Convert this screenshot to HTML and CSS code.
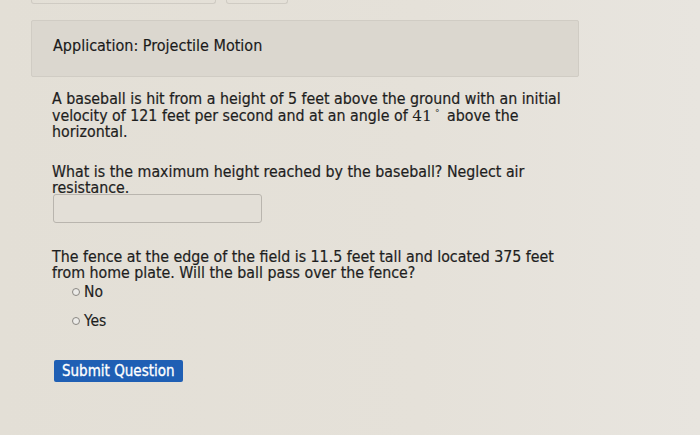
FILE: index.html
```html
<!DOCTYPE html>
<html>
<head>
<meta charset="utf-8">
<link rel="stylesheet" href="styles.css">
</head>
<body>
<div class="page">
  <div class="topbar"><span class="tab tab1"></span><span class="tab tab2"></span></div>
  <div class="header">Application: Projectile Motion</div>
  <div class="content">
    <p class="para">A baseball is hit from a height of 5 feet above the ground with an initial velocity of 121 feet per second and at an angle of <span class="math">41<span class="deg">°</span></span> above the horizontal.</p>
    <p class="para q2">What is the maximum height reached by the baseball? Neglect air resistance.</p>
    <div class="answer"></div>
    <p class="para q3">The fence at the edge of the field is 11.5 feet tall and located 375 feet from home plate. Will the ball pass over the fence?</p>
    <div class="options">
      <label class="opt"><span class="radio"></span>No</label>
      <label class="opt"><span class="radio"></span>Yes</label>
    </div>
    <button class="submit">Submit Question</button>
  </div>
</div>
</body>
</html>
```
FILE: styles.css
```css
html, body {
  margin: 0;
  padding: 0;
}
body {
  width: 700px;
  height: 435px;
  overflow: hidden;
  background: linear-gradient(90deg, #e3dfd6 0%, #e5e1d9 60%, #e8e5df 100%);
  font-family: "DejaVu Sans Condensed", "DejaVu Sans", sans-serif;
  color: #1e1e1e;
}
.page {
  padding-left: 31px;
}
.topbar {
  display: flex;
  gap: 10px;
  height: 4px;
  margin-bottom: 16px;
}
.tab {
  display: block;
  height: 3px;
  border: 1px solid #cfcbc3;
  border-top: none;
  border-radius: 0 0 3px 3px;
}
.tab1 { width: 183px; }
.tab2 { width: 60px; }
.header {
  width: 525px;
  height: 49px;
  padding-left: 21px;
  padding-bottom: 6px;
  display: flex;
  align-items: center;
  background: #dbd7cf;
  border: 1px solid #d0ccc4;
  border-radius: 2px;
  font-size: 16px;
  color: #1a1a1a;
  -webkit-text-stroke: 0.15px #1a1a1a;
}
.content {
  padding-left: 21px;
  padding-top: 14px;
}
.para {
  margin: 0;
  width: 528px;
  font-size: 15.8px;
  line-height: 16.5px;
  -webkit-text-stroke: 0.2px #1e1e1e;
}
.math {
  font-family: "DejaVu Serif", serif;
  font-size: 15.5px;
  -webkit-text-stroke: 0;
  margin-right: 3px;
}
.deg {
  font-family: "DejaVu Sans", sans-serif;
  font-size: 9px;
  margin-left: 3px;
  vertical-align: 5px;
  line-height: 0;
}
.q2 {
  margin-top: 23px;
}
.answer {
  width: 207px;
  height: 27px;
  margin-top: -3px;
  margin-left: 1px;
  border: 1px solid #b9b5ae;
  border-radius: 3px;
  background: #e3dfd7;
}
.q3 {
  margin-top: 26px;
}
.options {
  display: flex;
  flex-direction: column;
  gap: 12px;
  padding-left: 20px;
  padding-top: 2px;
}
.opt {
  display: flex;
  align-items: center;
  gap: 4px;
  font-size: 15.5px;
  height: 17px;
  -webkit-text-stroke: 0.15px #1e1e1e;
}
.radio {
  display: inline-block;
  width: 6px;
  height: 6px;
  border: 1px solid #8a8782;
  border-radius: 50%;
  background: #ecebe8;
}
.submit {
  margin-top: 30px;
  margin-left: 2px;
  height: 22px;
  padding: 0 8px;
  background: #1f5fb4;
  color: #ffffff;
  border: none;
  border-radius: 2px;
  font-family: "DejaVu Sans Condensed", "DejaVu Sans", sans-serif;
  font-size: 15px;
  font-weight: normal;
  line-height: 22px;
  -webkit-text-stroke: 0.3px #ffffff;
}
```
